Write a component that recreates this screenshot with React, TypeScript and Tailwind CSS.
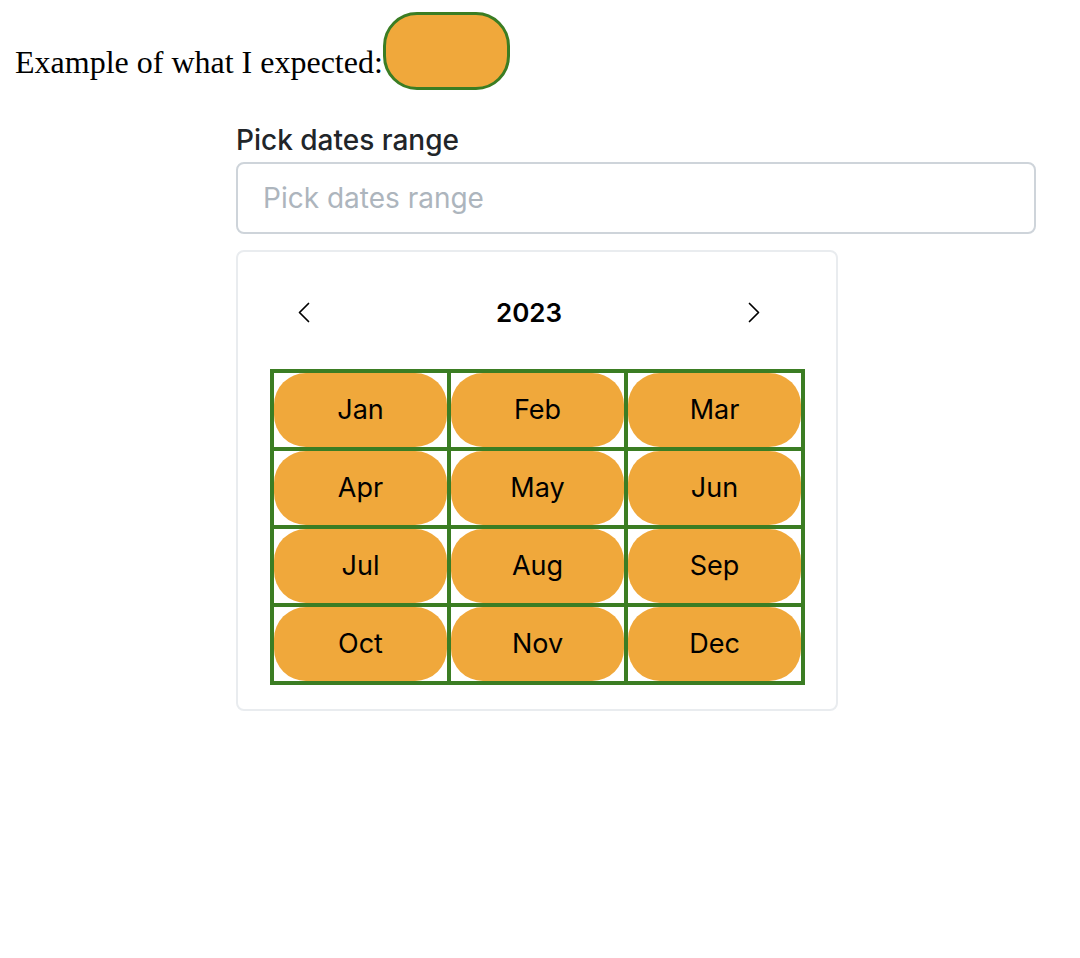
const months = ["Jan", "Feb", "Mar", "Apr", "May", "Jun", "Jul", "Aug", "Sep", "Oct", "Nov", "Dec"];

const Chevron: React.FC<{ dir: "left" | "right" }> = ({ dir }) => (
  <svg width="12" height="21" viewBox="0 0 12 21" fill="none">
    <polyline
      points={dir === "left" ? "10.5,1.5 1.5,10.5 10.5,19.5" : "1.5,1.5 10.5,10.5 1.5,19.5"}
      stroke="#000"
      strokeWidth="1.7"
      strokeLinecap="round"
      strokeLinejoin="round"
    />
  </svg>
);

export default function App() {
  return (
    <div className="min-h-screen bg-white">
      <div className="flex items-start pl-[15px] pt-[12px]">
        <span className="mt-[26px] font-['Liberation_Serif',serif] text-[32px] text-black">
          Example of what I expected:
        </span>
        <span className="h-[78px] w-[127px] rounded-[34px] border-[3.5px] border-[#3b7d23] bg-[#f0a83b]" />
      </div>

      <div className="ml-[236px] mt-[29px] w-[800px] font-['Inter',sans-serif]">
        <label className="block text-[28px] font-medium leading-[1.55] text-[#212529]">
          Pick dates range
        </label>
        <input
          readOnly
          placeholder="Pick dates range"
          className="block h-[72px] w-full rounded-[8px] border-2 border-[#ced4da] bg-white px-[25px] text-[28px] text-[#212529] outline-none placeholder:text-[#adb5bd]"
        />

        <div className="mt-[16px] w-[602px] rounded-[8px] border-2 border-[#e9ecef] bg-white pb-[24px] pl-[32px] pr-[31px] pt-[32px]">
          <div className="flex h-[56px] w-[518px] items-center">
            <button className="flex h-full w-[68px] items-center justify-center">
              <Chevron dir="left" />
            </button>
            <div className="flex flex-1 items-center justify-center text-[26px] font-semibold text-black">
              2023
            </div>
            <button className="flex h-full w-[68px] items-center justify-center">
              <Chevron dir="right" />
            </button>
          </div>

          <div className="mt-[29px] grid w-[535px] grid-cols-3 gap-[4px] bg-[#3b7d23] p-[4px]">
            {months.map((m) => (
              <div key={m} className="h-[74px] bg-white">
                <div className="flex h-full items-center justify-center rounded-[32px] bg-[#f0a83b] text-[27px] text-black">
                  {m}
                </div>
              </div>
            ))}
          </div>
        </div>
      </div>
    </div>
  );
}
